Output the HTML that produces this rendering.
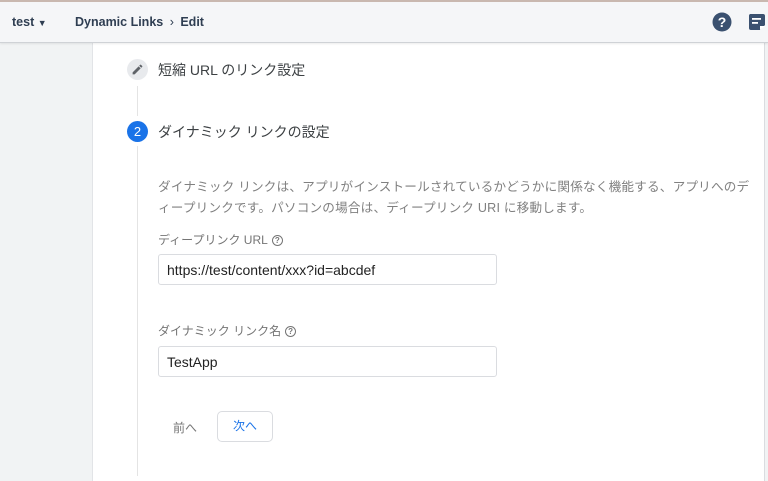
<!DOCTYPE html>
<html><head><meta charset="utf-8"><style>
*{margin:0;padding:0;box-sizing:border-box}
body{width:768px;height:481px;overflow:hidden;background:#f1f3f4;font-family:"Liberation Sans","Noto Sans CJK JP",sans-serif;position:relative}
.top{position:absolute;left:0;top:0;width:768px;height:43px;background:#f5f6f8;border-top:2px solid #c9b8b0;border-bottom:1px solid #cfd2d6;box-shadow:0 1px 2px rgba(0,0,0,.08);z-index:2}
.t{position:absolute;font-size:12.5px;color:#2f3e52;font-weight:bold;top:13px}
.card{position:absolute;left:92px;top:43px;width:673px;height:438px;background:#fff;border-left:1px solid #e2e4e7;border-right:1px solid #dadce0}
.abs{position:absolute}
.vl{position:absolute;left:137px;width:1px;background:#e4e4e4}
.h{position:absolute;font-size:14px;color:#3c4043;left:158px}
.lbl{position:absolute;left:158px;font-size:12px;color:#757575}
.q{display:inline-block;width:11px;height:11px;border:1.3px solid #757575;border-radius:50%;font-size:8px;text-align:center;line-height:9px;vertical-align:middle;margin-left:4px;font-weight:bold}
.inp{position:absolute;left:158px;width:339px;height:31px;border:1px solid #dadce0;border-radius:3px;font-size:14px;color:#222;padding:7px 0 0 8px}
</style></head><body>
<div class="top">
<div class="t" style="left:12px">test <span style="font-size:9px">▼</span></div>
<div class="t" style="left:75px">Dynamic Links <span style="font-weight:normal;margin:0 3px">›</span> Edit</div>
<svg class="abs" style="left:712px;top:10px" width="20" height="20" viewBox="0 0 20 20"><circle cx="10" cy="10" r="9.5" fill="#3b5170"/><text x="10" y="15" text-anchor="middle" font-size="14" font-weight="bold" fill="#fff" font-family="Liberation Sans">?</text></svg>
<svg class="abs" style="left:748px;top:11px" width="18" height="18" viewBox="0 0 18 18"><path d="M2 1h13a2 2 0 0 1 2 2v9l-5 5H3a2 2 0 0 1-2-2V3a2 2 0 0 1 1-2z" fill="#3b5170"/><rect x="4" y="5" width="9" height="1.8" fill="#fff"/><rect x="4" y="9" width="6" height="1.8" fill="#fff"/><path d="M12 17v-4h5" fill="#fff"/></svg>
</div>
<div class="card"></div>
<div class="vl" style="top:86px;height:30px"></div>
<div class="vl" style="top:146px;height:330px"></div>
<div class="abs" style="left:127px;top:59px;width:21px;height:21px;border-radius:50%;background:#e8eaed"></div>
<svg class="abs" style="left:131px;top:63px" width="13" height="13" viewBox="0 0 24 24"><path d="M3 17.25V21h3.75L17.81 9.94l-3.75-3.75L3 17.25zM20.71 7.04a1 1 0 0 0 0-1.41l-2.34-2.34a1 1 0 0 0-1.41 0l-1.83 1.83 3.75 3.75 1.83-1.83z" fill="#5f6368"/></svg>
<div class="h" style="top:60px">短縮 URL のリンク設定</div>
<div class="abs" style="left:127px;top:121px;width:21px;height:21px;border-radius:50%;background:#1a73e8;color:#fff;font-size:13px;text-align:center;line-height:21px">2</div>
<div class="h" style="top:122px">ダイナミック リンクの設定</div>
<div class="abs" style="left:158px;top:177px;font-size:12.6px;letter-spacing:0.2px;color:#808080;line-height:21px;white-space:nowrap">ダイナミック リンクは、アプリがインストールされているかどうかに関係なく機能する、アプリへのデ<br>ィープリンクです。パソコンの場合は、ディープリンク URI に移動します。</div>
<div class="lbl" style="top:231px">ディープリンク URL<span class="q">?</span></div>
<div class="inp" style="top:254px">https://test/content/xxx?id=abcdef</div>
<div class="lbl" style="top:322px">ダイナミック リンク名<span class="q">?</span></div>
<div class="inp" style="top:346px">TestApp</div>
<div class="abs" style="left:173px;top:419px;font-size:12px;color:#757575">前へ</div>
<div class="abs" style="left:217px;top:411px;width:56px;height:31px;border:1px solid #dadce0;border-radius:5px;font-size:12px;color:#1a73e8;text-align:center;line-height:29px">次へ</div>
</body></html>
